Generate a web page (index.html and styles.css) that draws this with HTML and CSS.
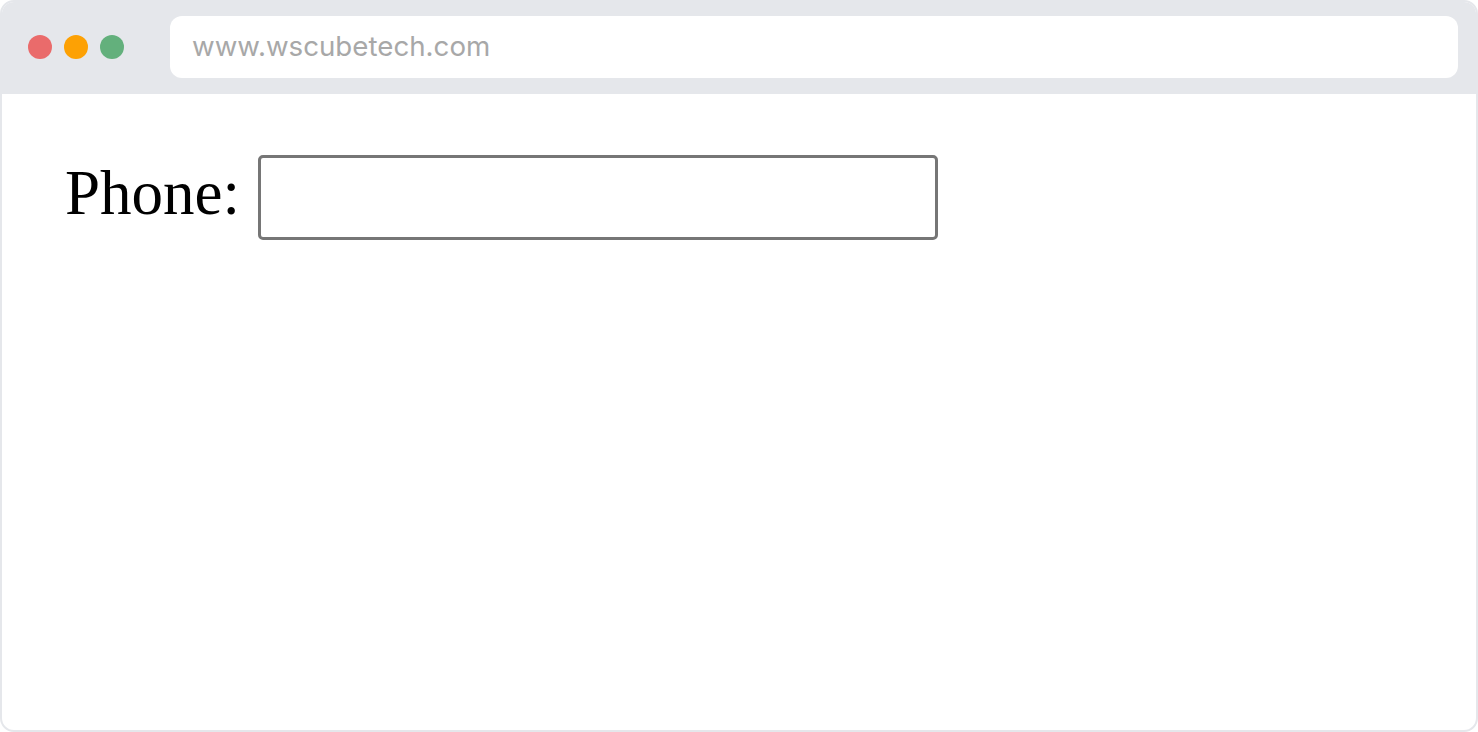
FILE: index.html
```html
<!DOCTYPE html>
<html>
<head>
<meta charset="utf-8">
<link rel="stylesheet" href="styles.css">
</head>
<body>
<div class="frame">
  <div class="topbar">
    <div class="dots">
      <span class="dot red"></span>
      <span class="dot orange"></span>
      <span class="dot green"></span>
    </div>
    <div class="address">www.wscubetech.com</div>
  </div>
  <div class="content">
    <label class="label" for="phone">Phone:</label>
    <input class="field" id="phone" type="tel">
  </div>
</div>
</body>
</html>
```

FILE: styles.css
```css
html, body {
  margin: 0;
  padding: 0;
  background: #ffffff;
}
.frame {
  box-sizing: border-box;
  width: 1478px;
  height: 732px;
  border: 2px solid #e5e7eb;
  border-radius: 14px;
  overflow: hidden;
  background: #ffffff;
}
.topbar {
  box-sizing: border-box;
  height: 92px;
  background: #e5e7eb;
  display: flex;
  align-items: center;
  padding: 0 18px 2px 26px;
}
.dots {
  display: flex;
  gap: 12px;
  width: 142px;
}
.dot {
  width: 24px;
  height: 24px;
  border-radius: 50%;
  display: block;
}
.red { background: #ea6b6b; }
.orange { background: #fda104; }
.green { background: #63b07c; }
.address {
  flex: 1;
  height: 62px;
  box-sizing: border-box;
  background: #ffffff;
  border-radius: 12px;
  display: flex;
  align-items: center;
  padding: 0 0 2px 22px;
  font-family: Inter, "Noto Sans", sans-serif;
  font-size: 27.7px;
  font-weight: 400;
  color: #a8a8a8;
}
.content {
  display: flex;
  align-items: center;
  padding: 61px 0 0 63px;
  gap: 18px;
}
.label {
  font-family: "Liberation Serif", "Times New Roman", serif;
  font-size: 63px;
  color: #000000;
  line-height: 1;
  margin-top: -8px;
}
.field {
  box-sizing: border-box;
  width: 680px;
  height: 85px;
  border: 3px solid #767676;
  border-radius: 5px;
  background: #ffffff;
  margin: 0;
  padding: 0;
}
```
